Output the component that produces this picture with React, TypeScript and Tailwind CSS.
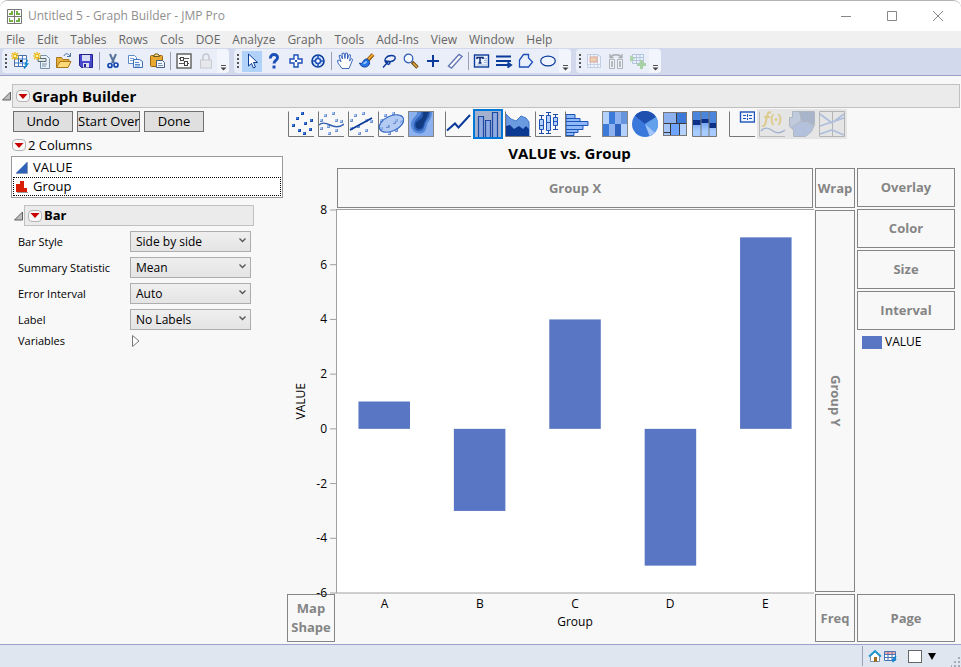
import React, { useState } from 'react';
import clsx from 'clsx';

interface IconDef {
  name: string;
  art: React.ReactNode;
}

const NAVY = '#0a3a9a';

const MENUS = ['File', 'Edit', 'Tables', 'Rows', 'Cols', 'DOE', 'Analyze', 'Graph', 'Tools', 'Add-Ins', 'View', 'Window', 'Help'];

const DATA = [
  { group: 'A', value: 1 },
  { group: 'B', value: -3 },
  { group: 'C', value: 4 },
  { group: 'D', value: -5 },
  { group: 'E', value: 7 },
];

const Y_MAX = 8;
const Y_MIN = -6;
const TICKS = [8, 6, 4, 2, 0, -2, -4, -6];
const yPct = (v: number) => ((Y_MAX - v) / (Y_MAX - Y_MIN)) * 100;

const sparkle = (
  <g stroke="#f0b400" strokeWidth="1.2">
    <path d="M4 0v8M0 4h8M1 1l6 6M7 1l-6 6" />
    <circle cx="4" cy="4" r="1.3" fill="#fff3a0" stroke="none" />
  </g>
);

const fileTools: IconDef[] = [
  { name: 'New data table', art: <>
    <path d="M3.5 3.5h12v11h-12z" fill="#fff" stroke="#4a6fa5" />
    <path d="M3.5 7h12M3.5 11h12M7.5 3.5v11M11.5 3.5v11" stroke="#3c78c8" fill="none" />
    <rect x="9" y="8" width="2" height="2" fill="#111" />
    <path d="M16.500 8l-2 4h2l-3.500 4.500" stroke="#1287d0" strokeWidth="1.600" fill="none" />{sparkle}</> },
  { name: 'New script', art: <>
    <path d="M7.500 3.500h6l3 3v10h-9z" fill="#e8f1fa" stroke="#7890a8" />
    <path d="M5 6.500h8v3H5z" fill="#dfe8e4" stroke="#5b6c74" />
    <path d="M9 12h5M9 14h4" stroke="#7890a8" />{sparkle}</> },
  { name: 'Open', art: <>
    <path d="M1.500 15.500v-10h5l1.500 2h6v3" fill="#e8b040" stroke="#a87818" />
    <path d="M1.500 15.500l3.500-6h11l-3 6z" fill="#ffd978" stroke="#a87818" />
    <path d="M9 4c1-3 4-3 6 0M15.500 1v3.500H12" stroke="#4a6fa5" fill="none" /></> },
  { name: 'Save', art: <>
    <path d="M2.500 2.500h13v13h-11l-2-2z" fill="#4848cc" stroke="#22228a" />
    <rect x="5" y="3" width="8" height="6" fill="#d8dcf4" />
    <rect x="6" y="11" width="6" height="4.500" fill="#dfe3f0" />
    <rect x="7" y="12" width="2" height="3" fill="#22228a" /></> },
];

const editTools: IconDef[] = [
  { name: 'Cut', art: <>
    <path d="M6 2l4 9M12 2L8 11" stroke="#56749c" strokeWidth="2" />
    <circle cx="6" cy="13.500" r="2" fill="none" stroke="#1747b0" strokeWidth="1.700" />
    <circle cx="12" cy="13" r="2" fill="none" stroke="#1747b0" strokeWidth="1.700" /></> },
  { name: 'Copy', art: <>
    <path d="M2.500 3.500h6l2 2v6h-8z" fill="#fff" stroke="#5b8ac8" />
    <path d="M4 6.500h4M4 8.500h3" stroke="#7fa5dc" />
    <path d="M7.500 7.500h6l3 2v6h-9z" fill="#f0f6ff" stroke="#3f6fb5" />
    <path d="M9 10.500h4M9 12.500h5M9 14h5" stroke="#5b8ac8" /></> },
  { name: 'Paste', art: <>
    <rect x="2.500" y="3.500" width="12" height="11" rx="1" fill="#e8a92e" stroke="#996515" />
    <path d="M5.500 4.500l1.500-2.500h3l1.500 2.500z" fill="#ffe08a" stroke="#6c5a24" />
    <path d="M8.500 8.500h6l2 2v5h-8z" fill="#f4f8ff" stroke="#465c80" />
    <path d="M10 11.500h4M10 13.500h5" stroke="#7d93b5" /></> },
];

const miscTools: IconDef[] = [
  { name: 'Preferences', art: <>
    <rect x="2" y="2" width="14" height="14" fill="#fafafa" stroke="#666" strokeWidth="1.500" />
    <path d="M4 6.500h10M4 11.500h10" stroke="#555" />
    <rect x="5.500" y="5.500" width="3" height="3" fill="#fff" stroke="#444" />
    <rect x="9.500" y="9.500" width="3" height="4" fill="#fff" stroke="#444" /></> },
  { name: 'Lock', art: <>
    <path d="M6 8V5a3 3 0 0 1 6 0v3" fill="none" stroke="#c6c9cf" strokeWidth="1.600" />
    <rect x="3.500" y="8" width="11" height="8" fill="#e6e8ec" stroke="#c6c9cf" /></> },
];

const pointerTools: IconDef[] = [
  { name: 'Arrow', art: <path d="M5.500 2v12l3-2.500 2 4.500 2-1-2-4.500h4z" fill="#fff" stroke={NAVY} /> },
  { name: 'Help', art: <path d="M5.500 6.500C5 1 13 1.500 12.500 6 12.300 8.500 9 8.500 9 11.500M9 13.500v3" fill="none" stroke="#1c4fb8" strokeWidth="3" /> },
  { name: 'Crosshairs', art: <>
    <path d="M7 3h4v4h4v4h-4v4H7v-4H3V7h4z" fill="#fff" stroke="#1c4fb8" strokeWidth="1.400" />
    <rect x="8" y="8" width="2" height="2" fill="#1c4fb8" /></> },
  { name: 'Scroller', art: <>
    <circle cx="9" cy="9" r="6" fill="#cfe0fa" stroke={NAVY} strokeWidth="1.600" />
    <circle cx="9" cy="9" r="2.500" fill="#fff" stroke="#1c4fb8" strokeWidth="1.500" />
    <path d="M9 3v12M3 9h12" stroke="#1c4fb8" strokeWidth="1.500" strokeDasharray="3 6" /></> },
];

const grabTools: IconDef[] = [
  { name: 'Grabber', art: <path d="M6 16.500L2 11l-.5-2.500 2-.3 1.500 1.600-2-6L4.500 3l2 4-.5-5.500 2-.5 1 5.500.5-5.500 2 .3v5.700l1.500-4.500 1.600.6-1 6 1.900-2.500 1.200 1L14 14l-1 2.500z" fill="#fff" stroke="#2a5ab4" strokeWidth=".9" /> },
  { name: 'Brush', art: <>
    <path d="M9 9l6-6.500" stroke="#8a5410" strokeWidth="4" /><path d="M9 8.500l6-6" stroke="#f0a62c" strokeWidth="2" />
    <path d="M10 7.500c3 2 1.500 7.500-3 7.500-3 0-4-1-5.500-4 2 1 3 0 3.500-1.500C6.500 7 8.500 6.500 10 7.500z" fill="#2a78e8" stroke="#0c3ea0" />
    <path d="M5.500 11c1 .5 2 0 3-1.500" stroke="#a8ccff" fill="none" strokeWidth="1.500" /></> },
  { name: 'Lasso', art: <path d="M3 15.500L7 11C2.500 9 6 3.500 11.500 3.500S16 8.500 11 9.500c-2 .5-4 .3-5-1M7 11c-.5-2 3-2.500 3-.5s-3 2.500-3 .5" fill="none" stroke={NAVY} strokeWidth="1.400" /> },
  { name: 'Magnifier', art: <>
    <path d="M10 10l5.500 5.500" stroke="#6c4a12" strokeWidth="3.400" /><path d="M11 11l4 4" stroke="#e8ad3c" strokeWidth="1.500" />
    <circle cx="6.500" cy="6.500" r="4.300" fill="#f4f8ff" stroke="#2a5ab4" strokeWidth="1.200" /></> },
  { name: 'Selection', art: <path d="M9 3v12M3 9h12" stroke={NAVY} strokeWidth="2" /> },
  { name: 'Ruler', art: <path d="M2.500 14L13 2.500l3 2L5.500 16z" fill="#fff" stroke="#6478b4" strokeWidth="1.400" /> },
];

const drawTools: IconDef[] = [
  { name: 'Annotate', art: <>
    <rect x="1.500" y="3" width="14" height="12" fill="#eaf1fc" stroke={NAVY} strokeWidth="1.400" />
    <path d="M4 7V5.500h6V7M7 5.500V11M5.500 11h3" fill="none" stroke="#0a2a78" strokeWidth="1.500" />
    <path d="M11 6.500h3M11 8.500h3M11 10.500h3M4 13h10" stroke="#a3b9dc" /></> },
  { name: 'Line', art: <path d="M1 4.500h15M1 9h15M1 13h13M12.500 10.500L16 13l-3.500 2.500" fill="none" stroke={NAVY} strokeWidth="2" /> },
  { name: 'Polygon', art: <path d="M2.500 15V8l4-5.500h5V6l4 4-4 5z" fill="#eaf1fc" stroke="#1c4fb8" strokeWidth="1.300" /> },
  { name: 'Simple shape', art: <ellipse cx="9" cy="9" rx="7.300" ry="4.800" fill="#eef4fd" stroke={NAVY} strokeWidth="1.200" /> },
];

const tableTools: IconDef[] = [
  { name: 'Table', art: <g opacity=".4">
    <path d="M2.500 2.500h10l3 2v11h-13z" fill="#fff" stroke="#7f9cc8" /><path d="M5.500 3v12M3 12.500h12M9 3v12M12.500 3v12" stroke="#90a8cc" />
    <rect x="5" y="5" width="7" height="5" fill="#f0a040" stroke="#c83c1c" /></g> },
  { name: 'Join', art: <g opacity=".4">
    <path d="M2.500 7.500h5v9h-5zM10.500 7.500h5v9h-5z" fill="#fff" stroke="#555" /><path d="M4 10h2M4 12h2M4 14h2M12 10h2M12 12h2M12 14h2" stroke="#333" strokeWidth="1.300" />
    <path d="M4 5c1-3 9-3 10 0M3 2v3.500h3.500M15 2v3.500h-3.500" fill="none" stroke="#444" strokeWidth="1.300" /></g> },
  { name: 'Add rows', art: <g opacity=".4">
    <path d="M3.500 2.500h11v9h-11z" fill="#eef6ff" stroke="#5f84b8" /><path d="M4 5.500h10M4 8.500h10M7.500 3v8M11 3v8" stroke="#5f84b8" />
    <path d="M1 3v7l5-3.500z" fill="#55b030" /><path d="M12.500 8v9M8 12.500h9" stroke="#48a32c" strokeWidth="3" /></g> },
];

const frame = <path d="M.5.5v25h25.500" fill="none" stroke="#777" />;
const dot = (x: number, y: number, light = true) => (
  <g key={`${x}-${y}`}>
    <rect x={x} y={y} width="3" height="3" fill={light ? '#a6c4f4' : '#3c78dc'} />
    <path d={`M${x} ${y + 2.5}h2.500v-2.500`} stroke={light ? '#6b8cc8' : '#1546a0'} fill="none" />
  </g>
);
const cloud: [number, number][] = [[6, 3], [14, 1], [17, 8], [2, 8], [22, 9], [9, 14], [2, 16], [17, 18], [10, 21]];

const elementGroups: IconDef[][] = [
  [
    { name: 'Points', art: <>{frame}{[[13, 1], [8, 6], [22, 8], [4, 13], [16, 11], [10, 18], [21, 17], [15, 21]].map(([x, y]) => dot(x, y, false))}</> },
    { name: 'Smoother', art: <>{frame}{cloud.map(([x, y]) => dot(x, y))}<path d="M1 14c3-3 7-2 11 0s9 3 14-1" fill="none" stroke="#3560b0" strokeWidth="1.400" /></> },
    { name: 'Line of fit', art: <>{frame}{cloud.map(([x, y]) => dot(x, y))}<path d="M2 19L24 7" stroke={NAVY} strokeWidth="1.800" /></> },
    { name: 'Ellipse', art: <>{frame}{cloud.map(([x, y]) => dot(x, y))}<ellipse cx="13.500" cy="12.500" rx="13" ry="7.500" transform="rotate(-25 13.500 12.500)" fill="#8fb4f0" fillOpacity=".65" stroke="#3768c8" strokeWidth="1.200" />{dot(15, 10)}{dot(8, 14)}</> },
    { name: 'Contour', art: <>
      <rect x=".5" y=".5" width="25" height="25" fill="#8db1ee" stroke="#858585" />
      <path d="M9 1c1 4-6 6-6 12 0 6 4 10 9 9.500 5 0 6-4 7-8.500 1-4 5-6 5-13z" fill="#5487d8" />
      <path d="M13 1c1 5-7 6-7 13 0 4 2 6 5 6 5 0 5-4 6-7 1-4 5-6 5-12z" fill="#2a5cb4" />
      <path d="M15 1c1 5-2 7-5 9-4 2-3 8 1 8 5 0 4-5 6-8l4-9z" fill="#123a80" /></> },
  ],
  [
    { name: 'Line', art: <>{frame}<path d="M2 19.500l8-7 3.500 4L25 4" fill="none" stroke={NAVY} strokeWidth="2" /></> },
    { name: 'Bar', art: <path d="M3.500 26V5.500h5V26M10.500 26V9.500h5V26M17.500 26V1.500h5V26" fill="#8faae0" stroke="#1d49a4" strokeWidth="1.200" /> },
    { name: 'Area', art: <>
      <path d="M1 25V3l5 5 5 2 5-5 5 2 3 4v14z" fill="#6a9ae0" stroke="#4178cc" /><path d="M1 25V15l4-1 4 4 5-3 4 3 3-3 3 3v7z" fill="#0b3890" />{frame}</> },
    { name: 'Box plot', art: <>{frame}
      <path d="M6.500 4v19M4 4.500h5M4 22.500h5M13.500 1v22M11 1.500h5M11 22.500h5M20.500 3v16M18 3.500h5M18 18.500h5" stroke="#1d49a4" />
      <path d="M4.500 8.500h4v10h-4zM11.500 4.500h4v15h-4zM18.500 6.500h4v8h-4z" fill="#b4d0fa" stroke="#1d54b8" /><path d="M4 14.500h5M11 11.500h5M18 10.500h5" stroke="#1d54b8" /></> },
    { name: 'Histogram', art: <><g fill="#8fb8f8" stroke="#1d54b8"><path d="M1 3.500h9v4H1zM1 7.500h14v3H1zM1 10.500h22v4H1zM1 14.500h17v4H1zM1 18.500h12v3H1zM1 21.500h8v3H1z" /></g>{frame}</> },
  ],
  [
    { name: 'Heatmap', art: <>
      <rect width="26" height="26" fill="#8db1ee" /><path d="M1 1h6v12H1zM19 13h6v12h-6z" fill="#b4d0fc" /><path d="M7 1h6v12H7zM1 13h6v12H1z" fill="#3b7ad8" />
      <path d="M13 13h6v12h-6z" fill="#2f62bc" /><path d="M19 1h6v12h-6z" fill="#6594dc" /><rect x=".5" y=".5" width="25" height="25" fill="none" stroke="#858585" /></> },
    { name: 'Pie', art: <>
      <circle cx="13" cy="13" r="13" fill="#3b78dc" /><path d="M13 13L3 4.700A13 13 0 0 1 24 6z" fill="#1f50b0" /><path d="M13 13L24 6a13 13 0 0 1-1 15.500z" fill="#62a0ec" /><path d="M13 13l10 8.500A13 13 0 0 1 17.500 25z" fill="#a0c4fc" /></> },
    { name: 'Treemap', art: <g stroke="#3a3a3a">
      <path d="M1.500 1.500h13v11h-13z" fill="#8db1ee" /><path d="M14.500 1.500h10v11h-10z" fill="#3b7ad8" /><path d="M1.500 12.500h7v9h-7zM1.500 21.500h7v3h-7z" fill="#a4c4fa" />
      <path d="M8.500 12.500h9v12h-9z" fill="#6ea4ff" /><path d="M17.500 12.500h7v12h-7z" fill="#b4d0fc" /><path d="M1.500 1.500h23v23h-23z" fill="none" stroke="#777" /></g> },
    { name: 'Mosaic', art: <>
      <defs><linearGradient id="mosaicFade" x2="0" y2="1"><stop offset=".4" stopColor="#6e9ff0" /><stop offset=".8" stopColor="#a8ccff" /></linearGradient></defs>
      <path d="M1 1h24v24H1z" fill="url(#mosaicFade)" /><path d="M1 1h8v9H1zM9 1h8v7H9zM17 1h8v11h-8z" fill="#4c86dc" />
      <path d="M1 9h8v5H1zM9 8h8v4H9zM17 12h8v5h-8z" fill="#0c3088" /><path d="M.5.5h24v25H.5zM9 1v24M17 1v24" fill="none" stroke="#777" /></> },
  ],
  [
    { name: 'Caption box', art: <>{frame}<rect x="11.500" y="1" width="14" height="10" fill="#f2f7ff" stroke="#1d54b8" strokeWidth="1.400" /><path d="M14 4.500h3M14 7.500h3M20 4.500h3M20 7.500h3M18.500 3v6" stroke="#1d54b8" strokeDasharray="3 1" /></> },
    { name: 'Formula', art: <>
      <path d="M.5.5v25h25.500" stroke="#bbb" fill="none" />
      <path d="M12 1.500C9 .5 8.500 3 8 6L6.500 12C6 15 4.500 15.500 3 14.500M5 6h6" fill="none" stroke="#dccb8a" strokeWidth="2" />
      <path d="M14.500 3c-3 4-3 7 0 11M19.500 3c3 4 3 7 0 11" fill="none" stroke="#dccb8a" strokeWidth="1.700" /><circle cx="17" cy="8.500" r="1.500" fill="#dccb8a" />
      <path d="M2 20c4-5 8-3 12 0s8 2 12-1" fill="none" stroke="#a3b4d0" strokeWidth="1.500" /></> },
    { name: 'Map shapes', art: <g stroke="#b0b6c0">
      <path d="M.5 6.500h3v-6h8l1 12-9 5-3-2z" fill="#c0cadd" /><path d="M10.500.5h15v12h-4l-9-3z" fill="#a8b4ca" /><path d="M2.500 16.500l9-6h7l4 3h3l-3 7-6 5h-12v-6z" fill="#b4c1dd" /></g> },
    { name: 'Parallel', art: <><path d="M.5.5h25v25H.5zM13.500 1v24" fill="none" stroke="#b4b4b4" /><path d="M1 3l12 9 12-9M1 15l12-4 12-4M1 23l12-4 12 5" fill="none" stroke="#afbedb" strokeWidth="1.700" /></> },
  ],
];

const zoneBox = 'flex items-center justify-center border border-[#858585] text-[13px] leading-[19px] font-bold text-[#858585]';

const ToolButtons: React.FC<{ tools: IconDef[]; active?: string }> = ({ tools, active }) => (
  <>
    {tools.map(tool => (
      <button key={tool.name} aria-label={tool.name} className="flex h-[22px] w-[22px] items-center justify-center">
        <span className={clsx('flex h-[21px] w-5 items-center justify-center', tool.name === active && 'bg-[#b0d2f8]')}>
          <svg width="18" height="18" viewBox="0 0 18 18" fill="none" aria-hidden="true">{tool.art}</svg>
        </span>
      </button>
    ))}
  </>
);

const Band: React.FC<{ children: React.ReactNode }> = ({ children }) => (
  <div className="flex h-6 items-center rounded-sm bg-[#e9eef8]">
    <svg width="7" height="16" viewBox="0 0 7 16" aria-hidden="true">
      <path d="M4 1v14" stroke="#555" strokeWidth="2" strokeDasharray="2 2" />
    </svg>
    {children}
    <button aria-label="More tools" className="flex h-full w-3 items-end justify-center rounded-r-sm bg-[#f2f5fb] pb-[2px]">
      <svg width="7" height="6" viewBox="0 0 7 6" aria-hidden="true"><path d="M1 .5h5" stroke="#555" /><path d="M.5 2.500h6l-3 3z" fill="#444" /></svg>
    </button>
  </div>
);

const Divider = () => <div className="flex w-[5px] justify-center"><div className="h-[18px] w-px bg-[#9a9fb4]" /></div>;

const RedTriangle: React.FC<{ label: string }> = ({ label }) => (
  <button aria-label={label} className="flex h-3 w-[14px] shrink-0 items-center justify-center rounded-sm border border-[#b4b4b4] bg-[#f8f8f8]">
    <svg width="10" height="5" viewBox="0 0 10 5" aria-hidden="true"><path d="M.5 0h9L5 5z" fill="#c80000" /></svg>
  </button>
);

const Disclosure: React.FC<{ label: string }> = ({ label }) => (
  <button aria-label={label} className="shrink-0">
    <svg className="block" width="10" height="10" viewBox="0 0 10 10" aria-hidden="true"><path d="M8.500 1v8H.5z" fill="#bdbdbd" stroke="#606060" /></svg>
  </button>
);

const BAR_OPTIONS = [
  { id: 'style', label: 'Bar Style', options: ['Side by side', 'Stacked', 'Nested'] },
  { id: 'statistic', label: 'Summary Statistic', options: ['Mean', 'Median', 'Sum', 'N'] },
  { id: 'interval', label: 'Error Interval', options: ['Auto', 'None', 'Range'] },
  { id: 'label', label: 'Label', options: ['No Labels', 'Label by Value'] },
];

const ControlPanel = () => {
  const [column, setColumn] = useState('Group');
  const columns = [
    { name: 'VALUE', icon: <><path d="M11 0v11H0z" fill="#2e62b8" /><path d="M0 11.500h11.500V0" fill="none" stroke="#8a9ab8" /></> },
    { name: 'Group', icon: <><path d="M0 11V3h4V0h4v7h3v4z" fill="#d81e05" /><path d="M1 11.500h11" stroke="#999" /></> },
  ];

  return (
    <section className="w-[283px] shrink-0 pl-[11px] pt-[3px]">
      <div className="flex gap-1 pl-[2px]">
        {[['Undo', 'w-[60px]'], ['Start Over', 'w-[63px]'], ['Done', 'w-[60px]']].map(([text, width]) => (
          <button key={text} className={clsx('h-[21px] border border-[#707070] bg-[#dfdfdf] text-[13px] leading-[19px] whitespace-nowrap', width)}>{text}</button>
        ))}
      </div>
      <div className="mt-[3px] mb-px flex h-5 items-center gap-[2px] pl-px">
        <RedTriangle label="Columns options" />
        <span className="text-[13px] leading-5">2 Columns</span>
      </div>
      <div className="border border-[#999] bg-white p-px">
        {columns.map(c => (
          <button
            key={c.name}
            onClick={() => setColumn(c.name)}
            className={clsx('flex h-[19px] w-full items-center gap-1 border border-dotted pl-[2px] text-[13px]', column === c.name ? 'border-black' : 'border-transparent')}
          >
            <svg width="13" height="12" viewBox="0 0 13 12" aria-hidden="true">{c.icon}</svg>
            {c.name}
          </button>
        ))}
      </div>
      <div className="mt-[7px] flex items-center pl-[3px]">
        <Disclosure label="Collapse Bar" />
        <h2 className="flex h-[21px] w-[230px] items-center gap-[2px] border border-[#c0c0c0] bg-[#ebebeb] pl-[3px] text-[13px] font-bold"><RedTriangle label="Bar options" />Bar</h2>
      </div>
      <div className="mt-[5px] flex flex-col gap-[5px] pl-[7px] text-[11px]">
        {BAR_OPTIONS.map(o => (
          <div key={o.id} className="flex items-center">
            <label htmlFor={o.id} className="w-28 leading-[21px]">{o.label}</label>
            <div className="relative">
              <select id={o.id} className="block h-[21px] w-[121px] appearance-none border border-[#adadad] bg-linear-to-b from-[#efefef] to-[#e4e4e4] pl-[5px] text-xs">
                {o.options.map(v => <option key={v}>{v}</option>)}
              </select>
              <svg className="pointer-events-none absolute top-[7px] right-[5px]" width="7" height="5" viewBox="0 0 7 5" aria-hidden="true"><path d="M.5.5l3 3 3-3" fill="none" stroke="#555" strokeWidth="1.300" /></svg>
            </div>
          </div>
        ))}
        <div className="-mt-[2px] flex items-center">
          <span className="w-[114px]">Variables</span>
          <button aria-label="Expand Variables"><svg className="block" width="8" height="12" viewBox="0 0 8 12" aria-hidden="true"><path d="M.5.5v11L7 6z" fill="#fff" stroke="#777" /></svg></button>
        </div>
      </div>
    </section>
  );
};

const Chart = () => (
  <div className="relative -m-px border-t border-l border-[#a0a0a0] bg-white">
    <svg className="absolute inset-0 h-full w-full overflow-visible" role="img" aria-label="Bar chart of VALUE by Group">
      {DATA.map((d, i) => (
        <rect
          key={d.group}
          x={`${i * 20 + 4.5}%`}
          y={`${yPct(Math.max(d.value, 0))}%`}
          width="10.8%"
          height={`${(Math.abs(d.value) / (Y_MAX - Y_MIN)) * 100}%`}
          fill="#5876c3"
        />
      ))}
      <line x1="0" x2="100%" y1="100%" y2="100%" stroke="#a0a0a0" />
      {TICKS.map(t => (
        <g key={t} fontSize="12">
          <line x1="-7" x2="0" y1={`${yPct(t)}%`} y2={`${yPct(t)}%`} stroke="#a0a0a0" />
          <text x="-10" y={`${yPct(t)}%`} dy="4" textAnchor="end">{t}</text>
        </g>
      ))}
    </svg>
  </div>
);

const GraphPanel = () => {
  const [element, setElement] = useState('Bar');

  return (
    <section className="flex min-w-0 flex-1 flex-col pl-[3px] pr-[6px] pb-[2px]">
      <div className="flex h-8 items-center gap-[7px]">
        {elementGroups.map((group, gi) => (
          <div key={gi} className="flex">
            {group.map((el, i) => (
              <button
                key={el.name}
                aria-label={el.name}
                onClick={() => setElement(el.name)}
                className={clsx(
                  'flex h-[30px] w-[30px] items-center justify-center border-2',
                  el.name === element && gi === 1 ? 'border-[#0078d7] bg-[#a5b1cc]' : 'border-transparent',
                  gi === 3 && i > 0 && 'bg-[#e5e5e5]',
                )}
              >
                <svg className="shrink-0" width="26" height="26" viewBox="0 0 26 26" aria-hidden="true">{el.art}</svg>
              </button>
            ))}
          </div>
        ))}
      </div>
      <h2 className="mr-[102px] h-[28px] text-center text-[15px] leading-[26px] font-bold">VALUE vs. Group</h2>
      <div className="grid flex-1 grid-cols-[48px_1fr_40px_98px] grid-rows-[40px_1fr_48px] gap-[2px] pl-px">
        <div />
        <div className={zoneBox}>Group X</div>
        <div className={zoneBox}>Wrap</div>
        <div className="row-span-3 flex flex-col gap-[2px]">
          {['Overlay', 'Color', 'Size', 'Interval'].map(z => <div key={z} className={clsx(zoneBox, 'h-[39px]')}>{z}</div>)}
          <div className="flex items-center gap-[3px] pl-[5px] text-xs leading-5">
            <span className="h-[13px] w-5 bg-[#5876c3]" />VALUE
          </div>
          <div className={clsx(zoneBox, 'mt-auto h-12')}>Page</div>
        </div>
        <div className="flex items-center pl-[5px]">
          <span className="rotate-180 text-xs leading-[18px] [writing-mode:vertical-rl]">VALUE</span>
        </div>
        <Chart />
        <div className={zoneBox}><span className="[writing-mode:vertical-rl]">Group Y</span></div>
        <div className={clsx(zoneBox, 'text-center')}>Map<br />Shape</div>
        <div className="pt-px text-center text-xs leading-[18px]">
          <div className="grid grid-cols-5">{DATA.map(d => <span key={d.group}>{d.group}</span>)}</div>
          <div>Group</div>
        </div>
        <div className={zoneBox}>Freq</div>
      </div>
    </section>
  );
};

const App: React.FC = () => (
  <div className="flex min-h-screen flex-col overflow-hidden rounded-t-lg border-t border-[#b4b4b4] bg-[#f8f8f8] font-['Open_Sans','Noto_Sans',sans-serif] text-black">
    <header className="flex h-[30px] items-center bg-white pl-[7px] pr-[18px] text-xs text-[#8f8f8f]">
      <svg width="15" height="15" viewBox="0 0 15 15" aria-hidden="true">
        <path d="M.5.5h14v14H.5zM7.500 1v13M1 7.500h13" fill="#fff" stroke="#777" />
        <path d="M2 6V4h2V2h2v4zM9 6V2h2v2h2v2zM2 13V9h1v2h3v2zM9 13v-2h2V9h2v4z" fill="#72b043" />
      </svg>
      <h1 className="ml-[6px]">Untitled 5 - Graph Builder - JMP Pro</h1>
      <div className="ml-auto flex gap-9">
        <button aria-label="Minimize"><svg width="10" height="10" viewBox="0 0 10 10"><path d="M0 5.500h10" stroke="#888" /></svg></button>
        <button aria-label="Maximize"><svg width="10" height="10" viewBox="0 0 10 10"><path d="M.5.5h9v9h-9z" fill="none" stroke="#888" /></svg></button>
        <button aria-label="Close"><svg width="10" height="10" viewBox="0 0 10 10"><path d="M0 0l10 10M10 0L0 10" stroke="#888" /></svg></button>
      </div>
    </header>
    <nav className="flex h-[17px] items-center gap-3 bg-[#f0f0f0] pl-[6px] text-xs leading-[17px] text-[#666]">
      {MENUS.map(m => <button key={m}>{m}</button>)}
    </nav>
    <div className="flex h-7 items-start gap-[5px] border-b border-[#9aa2cc] bg-[#d3d9ec] pt-px pl-[2px]">
      <Band>
        <ToolButtons tools={fileTools} /><Divider /><ToolButtons tools={editTools} /><Divider /><ToolButtons tools={miscTools} />
      </Band>
      <Band>
        <ToolButtons tools={pointerTools} active="Arrow" /><Divider /><ToolButtons tools={grabTools} /><Divider /><ToolButtons tools={drawTools} />
      </Band>
      <Band><ToolButtons tools={tableTools} /></Band>
    </div>
    <main className="flex flex-1 flex-col pt-2">
      <div className="flex items-center pl-[2px] pr-px">
        <Disclosure label="Collapse Graph Builder" />
        <h2 className="flex h-6 flex-1 items-center gap-[2px] border border-[#c0c0c0] bg-[#ebebeb] pl-[3px] text-[15px] font-bold"><RedTriangle label="Graph Builder options" />Graph Builder</h2>
      </div>
      <div className="flex flex-1">
        <ControlPanel />
        <GraphPanel />
      </div>
    </main>
    <footer className="flex h-[23px] items-center justify-end border-t border-[#9aa2cc] bg-[#e0e6f0]">
      <div className="mr-[5px] h-5 w-px bg-[#9aa2bc]" />
      <button aria-label="Home window">
        <svg width="14" height="14" viewBox="0 0 14 14" aria-hidden="true"><path d="M2.500 7v5.500h9V7L7 3z" fill="#fff" stroke="#7c8fa8" /><path d="M1 7.500L7 2l6 5.500" fill="none" stroke="#2098d0" strokeWidth="1.700" /><rect x="6" y="8" width="3" height="5" fill="#a06c20" /></svg>
      </button>
      <button aria-label="Data table" className="ml-[2px]">
        <svg width="13" height="13" viewBox="0 0 13 13" aria-hidden="true"><path d="M.5 1.500h11v9H.5zM.5 4.500h11M.5 7.500h11M4 2v8M8 2v8" fill="#fff" stroke="#4774b0" /><path d="M1 3h10" stroke="#e05a5a" /><path d="M12 6l-3 3.500h2L8.500 12" stroke="#1287d0" strokeWidth="1.500" fill="none" /></svg>
      </button>
      <input type="checkbox" aria-label="Keep window" className="ml-[11px] h-[13px] w-[14px] appearance-none border border-[#666] bg-white" />
      <button aria-label="Window list" className="ml-[6px]"><svg width="8" height="7" viewBox="0 0 8 7"><path d="M0 0h8L4 7z" fill="#000" /></svg></button>
      <svg className="ml-[15px] self-end" width="10" height="12" viewBox="0 0 10 12" aria-hidden="true"><path d="M8 2v2M8 6v2M8 10v2M4 6v2M4 10v2M0 10v2" stroke="#a4acba" strokeWidth="2" /></svg>
    </footer>
  </div>
);

export default App;
